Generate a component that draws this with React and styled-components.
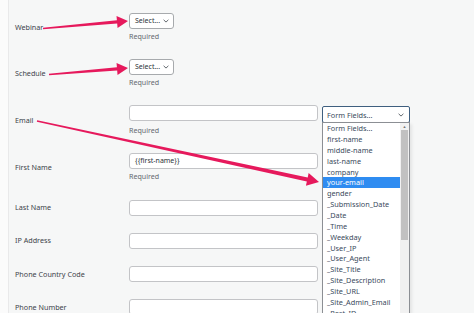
import React from "react";
import styled, { createGlobalStyle } from "styled-components";

const GlobalStyle = createGlobalStyle`
  html, body {
    margin: 0;
    padding: 0;
    background: #f6f7f7;
    font-family: "Noto Sans", "Open Sans", sans-serif;
    color: #3c434a;
  }
`;

const Shell = styled.div`
  position: relative;
  display: flex;
  width: 474px;
  height: 313px;
  overflow: hidden;
  background: #f6f7f7;
`;

const AdminStrip = styled.div`
  width: 8px;
  flex: none;
  background: #fbfbfb;
  border-right: 1px solid #e9e9ea;
`;

const Content = styled.div`
  flex: 1;
  padding: 4.3px 0 0 6px;
`;

const Row = styled.div`
  display: grid;
  grid-template-columns: 114px 1fr;
  align-items: center;
  padding: 8.6px 0;
`;

const Label = styled.div`
  font-size: 7.2px;
  line-height: 11px;
  color: #3c434a;
`;

const Field = styled.div`
  display: flex;
  flex-direction: column;
  align-items: flex-start;
`;

const ControlLine = styled.div`
  display: flex;
  align-items: flex-start;
  gap: 4px;
`;

const SelectBox = styled.div`
  box-sizing: border-box;
  display: inline-flex;
  align-items: center;
  gap: 3px;
  height: 16px;
  padding: 0 4px 0 5px;
  background: #fff;
  border: 1px solid #a7aaad;
  border-radius: 3px;
  font-size: 7px;
  line-height: 14px;
  color: #2c3338;
`;

const TextInput = styled.div`
  box-sizing: border-box;
  width: 189px;
  height: 16px;
  padding: 0 5px;
  display: flex;
  align-items: center;
  background: #fff;
  border: 1px solid #c3c4c7;
  border-radius: 3px;
  font-size: 7px;
  line-height: 14px;
  color: #2c3338;
`;

const Description = styled.div`
  margin-top: 2px;
  font-size: 7.1px;
  line-height: 11px;
  height: 11px;
  color: #646970;
`;

const Picker = styled.div`
  position: relative;
  margin-top: 1px;
  width: 88px;
`;

const PickerBox = styled.div`
  box-sizing: border-box;
  height: 17px;
  display: flex;
  align-items: center;
  justify-content: space-between;
  padding: 0 5px 0 4px;
  background: #fff;
  border: 1px solid #3f5f7f;
  border-radius: 2px;
  font-size: 7.3px;
  line-height: 14px;
  color: #3a4a5c;
`;

const OptionList = styled.div`
  position: absolute;
  top: calc(100% - 1px);
  left: 0;
  width: 88px;
  height: 200px;
  box-sizing: border-box;
  display: flex;
  background: #fff;
  border: 1px solid #8c8f94;
  box-shadow: 2px 2px 3px rgba(0, 0, 0, 0.08);
  z-index: 2;
`;

const Options = styled.div`
  flex: 1;
`;

const Option = styled.div`
  height: 10.85px;
  line-height: 10.85px;
  padding-left: 4px;
  font-size: 7.3px;
  white-space: nowrap;
  color: ${({ $active }) => ($active ? "#fff" : "#3a4a5c")};
  background: ${({ $active }) => ($active ? "#2f8cf1" : "transparent")};
`;

const ScrollTrack = styled.div`
  width: 9px;
  display: flex;
  flex-direction: column;
  align-items: center;
  background: #f1f1f1;
`;

const ScrollArrow = styled.div`
  height: 7px;
  display: flex;
  align-items: center;
  justify-content: center;
  font-size: 4px;
  color: #777;
`;

const ScrollThumb = styled.div`
  width: 7px;
  height: 110px;
  background: #c1c1c1;
`;

const Overlay = styled.svg`
  position: absolute;
  left: 0;
  top: 0;
  pointer-events: none;
  z-index: 5;
`;

const Chevron = () => (
  <svg width="6" height="4" viewBox="0 0 6 4">
    <path d="M0.6 0.8 L3 3.1 L5.4 0.8" fill="none" stroke="#50575e" strokeWidth="0.9" />
  </svg>
);

function arrowPoints(x1, y1, x2, y2, w0, w1, headLen, headHalf) {
  const dx = x2 - x1;
  const dy = y2 - y1;
  const len = Math.hypot(dx, dy);
  const ux = dx / len;
  const uy = dy / len;
  const nx = -uy;
  const ny = ux;
  const bx = x2 - ux * headLen;
  const by = y2 - uy * headLen;
  const pts = [
    [x1 + (nx * w0) / 2, y1 + (ny * w0) / 2],
    [bx + (nx * w1) / 2, by + (ny * w1) / 2],
    [bx + nx * headHalf, by + ny * headHalf],
    [x2, y2],
    [bx - nx * headHalf, by - ny * headHalf],
    [bx - (nx * w1) / 2, by - (ny * w1) / 2],
    [x1 - (nx * w0) / 2, y1 - (ny * w0) / 2],
  ];
  return pts.map((p) => p.join(",")).join(" ");
}

const arrows = [
  { x1: 43, y1: 28.5, x2: 128, y2: 21, w0: 1.6, w1: 3.2, hl: 11, hh: 6 },
  { x1: 49, y1: 74.5, x2: 128, y2: 68, w0: 1.6, w1: 3.2, hl: 11, hh: 6 },
  { x1: 37, y1: 121, x2: 319, y2: 182, w0: 1.6, w1: 4, hl: 12, hh: 6.5 },
];

const fieldOptions = [
  "Form Fields...",
  "first-name",
  "middle-name",
  "last-name",
  "company",
  "your-email",
  "gender",
  "_Submission_Date",
  "_Date",
  "_Time",
  "_Weekday",
  "_User_IP",
  "_User_Agent",
  "_Site_Title",
  "_Site_Description",
  "_Site_URL",
  "_Site_Admin_Email",
  "_Post_ID",
];

export default function App() {
  return (
    <>
      <GlobalStyle />
      <Shell>
        <AdminStrip />
        <Content>
          <Row>
            <Label>Webinar</Label>
            <Field>
              <SelectBox>
                Select... <Chevron />
              </SelectBox>
              <Description>Required</Description>
            </Field>
          </Row>
          <Row>
            <Label>Schedule</Label>
            <Field>
              <SelectBox>
                Select... <Chevron />
              </SelectBox>
              <Description>Required</Description>
            </Field>
          </Row>
          <Row>
            <Label>Email</Label>
            <Field>
              <ControlLine>
                <TextInput />
                <Picker>
                  <PickerBox>
                    Form Fields... <Chevron />
                  </PickerBox>
                  <OptionList>
                    <Options>
                      {fieldOptions.map((o) => (
                        <Option key={o} $active={o === "your-email"}>
                          {o}
                        </Option>
                      ))}
                    </Options>
                    <ScrollTrack>
                      <ScrollArrow>▲</ScrollArrow>
                      <ScrollThumb />
                    </ScrollTrack>
                  </OptionList>
                </Picker>
              </ControlLine>
              <Description>Required</Description>
            </Field>
          </Row>
          <Row>
            <Label>First Name</Label>
            <Field>
              <TextInput>{"{{first-name}}"}</TextInput>
              <Description>Required</Description>
            </Field>
          </Row>
          <Row>
            <Label>Last Name</Label>
            <Field>
              <TextInput />
            </Field>
          </Row>
          <Row>
            <Label>IP Address</Label>
            <Field>
              <TextInput />
            </Field>
          </Row>
          <Row>
            <Label>Phone Country Code</Label>
            <Field>
              <TextInput />
            </Field>
          </Row>
          <Row>
            <Label>Phone Number</Label>
            <Field>
              <TextInput />
            </Field>
          </Row>
        </Content>
        <Overlay width="474" height="313" viewBox="0 0 474 313">
          {arrows.map((a, i) => (
            <polygon
              key={i}
              points={arrowPoints(a.x1, a.y1, a.x2, a.y2, a.w0, a.w1, a.hl, a.hh)}
              fill="#e6195c"
            />
          ))}
        </Overlay>
      </Shell>
    </>
  );
}
